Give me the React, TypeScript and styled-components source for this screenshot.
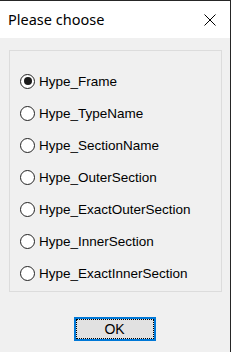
import React, { useState } from 'react';
import styled, { createGlobalStyle } from 'styled-components';

const GlobalStyle = createGlobalStyle`
    html, body {
        margin: 0;
        padding: 0;
        background: #f0f0f0;
    }
`;

const options = [
    'Hype_Frame',
    'Hype_TypeName',
    'Hype_SectionName',
    'Hype_OuterSection',
    'Hype_ExactOuterSection',
    'Hype_InnerSection',
    'Hype_ExactInnerSection',
];

const Window = styled.div`
    width: 231px;
    height: 352px;
    box-sizing: border-box;
    border-top: 1px solid #262626;
    border-right: 1px solid #262626;
    background: #f0f0f0;
    display: flex;
    flex-direction: column;
    font-family: "Liberation Sans", Arial, sans-serif;
    color: #000;
`;

const TitleBar = styled.div`
    height: 37px;
    background: #fff;
    display: flex;
    align-items: center;
    justify-content: space-between;
    padding: 0 14px 0 8px;
`;

const Title = styled.span`
    font-family: "Noto Sans", "Open Sans", sans-serif;
    font-size: 14.5px;
    margin-top: -1px;
`;

const CloseButton = styled.button`
    border: none;
    background: transparent;
    padding: 0;
    width: 12px;
    height: 12px;
    display: flex;
    cursor: pointer;
`;

const GroupBox = styled.div`
    margin: 12px 8px 0 9px;
    height: 242px;
    box-sizing: border-box;
    border: 1px solid #dcdcdc;
    padding-top: 14px;
    display: flex;
    flex-direction: column;
`;

const RadioRow = styled.label`
    height: 32px;
    display: flex;
    align-items: center;
    padding-left: 10px;
    font-size: 13.5px;
    cursor: pointer;
`;

const RadioCircle = styled.span<{ checked: boolean }>`
    width: 15px;
    height: 15px;
    box-sizing: border-box;
    border: 1.3px solid #222;
    border-radius: 50%;
    background: #fff;
    display: flex;
    align-items: center;
    justify-content: center;
    margin-right: 4px;
    flex-shrink: 0;

    &::after {
        content: '';
        width: 8px;
        height: 8px;
        border-radius: 50%;
        background: #1a1a1a;
        display: ${props => props.checked ? 'block' : 'none'};
    }
`;

const Footer = styled.div`
    display: flex;
    justify-content: center;
    padding-top: 25px;
    padding-right: 1px;
`;

const OkButton = styled.button`
    width: 82px;
    height: 24px;
    box-sizing: border-box;
    border: 2px solid #0078d7;
    background: #e1e1e1;
    padding: 0;
    font-family: "Liberation Sans", Arial, sans-serif;
    font-size: 14px;
    color: #000;
    outline: 1px dotted #000;
    outline-offset: -3px;
    cursor: pointer;
`;

export default () => {
    const [selected, setSelected] = useState(0);

    return (
        <>
            <GlobalStyle />
            <Window>
                <TitleBar>
                    <Title>Please choose</Title>
                    <CloseButton>
                        <svg width="12" height="12" viewBox="0 0 12 12">
                            <path d="M0.5 0.5 L11.5 11.5 M11.5 0.5 L0.5 11.5" stroke="#000" strokeWidth="1" />
                        </svg>
                    </CloseButton>
                </TitleBar>
                <GroupBox>
                    {options.map((name, idx) => (
                        <RadioRow key={name} onClick={() => setSelected(idx)}>
                            <RadioCircle checked={selected === idx} />
                            {name}
                        </RadioRow>
                    ))}
                </GroupBox>
                <Footer>
                    <OkButton>OK</OkButton>
                </Footer>
            </Window>
        </>
    );
}
